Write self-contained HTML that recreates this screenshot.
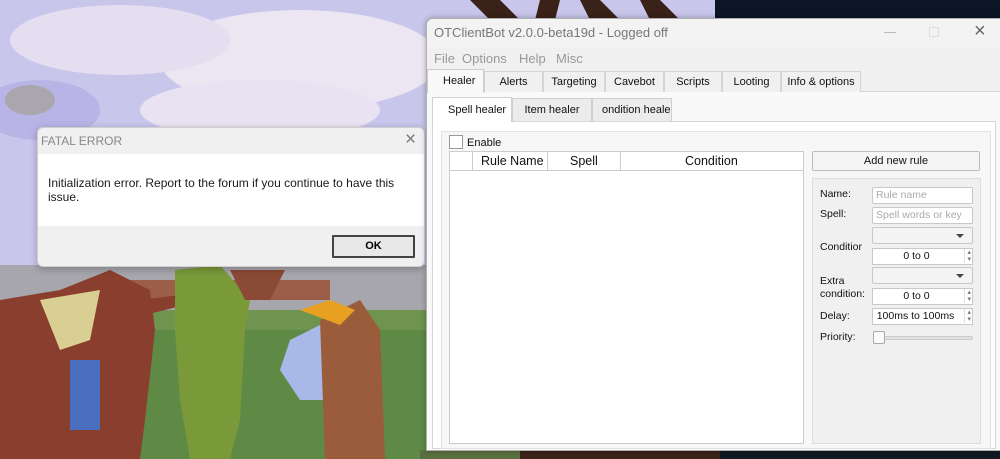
<!DOCTYPE html>
<html><head><meta charset="utf-8"><style>
*{margin:0;padding:0;box-sizing:border-box}
body{width:1000px;height:459px;overflow:hidden;position:relative;font-family:"Liberation Sans",sans-serif;background:#c9c6ec}
.a{position:absolute}
.t{position:absolute;white-space:nowrap}
.tab{position:absolute;top:71px;height:21px;border:1px solid #d4d4d4;border-bottom:none;background:#f0f0f0;font-size:11px;text-align:center;line-height:20px;color:#111;white-space:nowrap}
.itab{position:absolute;top:98px;height:23px;border:1px solid #d0d0d0;border-bottom:none;background:#ececec;font-size:11px;text-align:center;line-height:23px;color:#111;white-space:nowrap;overflow:hidden}
.lbl{position:absolute;left:820px;font-size:10.5px;color:#111}
.in{position:absolute;left:872px;width:101px;height:17px;background:#fff;border:1px solid #c8c8c8;border-radius:2px;font-size:10.5px;color:#aaa;padding-left:3px;line-height:15px;white-space:nowrap;overflow:hidden}
.cb{position:absolute;left:872px;width:101px;height:17px;background:#f4f4f4;border:1px solid #c8c8c8;border-radius:2px}
.cb:after{content:"";position:absolute;right:8px;top:6px;border-left:4px solid transparent;border-right:4px solid transparent;border-top:4px solid #444}
.sp{position:absolute;left:872px;width:101px;height:17px;background:#fff;border:1px solid #c8c8c8;font-size:10.5px;color:#111;text-align:center;line-height:15px;padding-right:12px;white-space:nowrap}
.sp:after{content:"▴\A▾";white-space:pre;position:absolute;right:1px;top:0;font-size:7px;line-height:7px;color:#777;border-left:1px solid #ddd;padding-left:2px}
</style></head><body>
<svg class="a" style="left:0;top:0" width="1000" height="459">
<rect width="1000" height="459" fill="#c9c6ec"/>
<rect x="715" y="0" width="285" height="20" fill="#0b1526"/>
<path d="M470 0 L500 0 L520 20 L490 20Z M540 0 L560 0 L555 20 L535 20Z M580 0 L600 0 L620 20 L590 20Z M640 0 L660 0 L680 20 L650 20Z" fill="#3a2218"/>
<ellipse cx="300" cy="60" rx="140" ry="50" fill="#ece6f2"/>
<ellipse cx="120" cy="40" rx="110" ry="35" fill="#e4def0"/>
<ellipse cx="260" cy="110" rx="120" ry="30" fill="#e8e2f2"/>
<ellipse cx="40" cy="110" rx="60" ry="30" fill="#b8b4e6"/>
<ellipse cx="30" cy="100" rx="25" ry="15" fill="#a9a6ad"/>
<rect x="0" y="265" width="430" height="50" fill="#a8a6ad"/>
<rect x="130" y="280" width="200" height="20" fill="#9c5e48"/>
<rect x="0" y="310" width="430" height="150" fill="#6f9450"/>
<rect x="0" y="330" width="430" height="130" fill="#5f8a45"/>
<path d="M0 300 L60 290 L110 270 L150 290 L155 330 L145 420 L140 459 L0 459Z" fill="#8a3f2e"/>
<path d="M40 300 L100 290 L90 340 L60 350Z" fill="#d9cf92"/>
<rect x="70" y="360" width="30" height="70" fill="#4a6fc0"/>
<path d="M140 300 L180 295 L185 305 L145 315Z" fill="#8a3f2e"/>
<path d="M175 270 L220 265 L250 300 L245 330 L240 420 L230 459 L190 459 L180 400 L175 330Z" fill="#7a9a3a"/>
<path d="M230 270 L285 270 L270 300 L245 300Z" fill="#8b4a35"/>
<path d="M290 340 L330 320 L360 330 L365 380 L340 400 L300 400 L280 370Z" fill="#a8b8e8"/>
<path d="M320 320 L360 300 L380 330 L385 459 L325 459Z" fill="#9b5c3c"/>
<path d="M300 310 L330 300 L355 310 L340 325Z" fill="#e8a020"/>
<rect x="420" y="450" width="580" height="9" fill="#101822"/>
<rect x="420" y="450" width="100" height="9" fill="#5a7040"/>
<rect x="520" y="450" width="200" height="9" fill="#3a2418"/>
</svg>

<!-- Fatal error dialog -->
<div class="a" style="left:37px;top:127px;width:388px;height:140px;background:#f0f0f0;border:1px solid #cfcfcf;border-radius:6px;box-shadow:0 2px 8px rgba(0,0,0,.25);overflow:hidden">
<div class="t" style="left:3px;top:6px;font-size:12px;color:#888">FATAL ERROR</div>
<div class="t" style="left:367px;top:1px;font-size:19px;color:#777;font-weight:300">×</div>
<div class="a" style="left:0;top:26px;width:388px;height:72px;background:#fff"></div>
<div class="t" style="left:10px;top:48px;font-size:12px;color:#1a1a1a;line-height:14px">Initialization error. Report to the forum if you continue to have this<br>issue.</div>
<div class="a" style="left:294px;top:107px;width:83px;height:23px;border:2px solid #444;border-radius:1px;background:#e8e8e8;font-size:11px;font-weight:bold;text-align:center;line-height:19px">OK</div>
</div>

<!-- Main window -->
<div class="a" style="left:426px;top:18px;width:576px;height:433px;background:#f0f0f0;border:1px solid #b0b0b0;border-radius:7px 0 0 0;box-shadow:0 0 6px rgba(0,0,0,.3)"></div>
<div class="a" style="left:427px;top:19px;width:573px;height:28px;background:#f3f3f3;border-radius:6px 0 0 0"></div>
<div class="t" style="left:434px;top:25px;font-size:13px;color:#777">OTClientBot v2.0.0-beta19d - Logged off</div>
<div class="a" style="left:884px;top:32px;width:12px;height:1px;background:#bbb"></div>
<div class="a" style="left:929px;top:27px;width:10px;height:10px;border:1px solid #ddd"></div>
<div class="t" style="left:974px;top:20px;font-size:20px;color:#666;font-weight:300">×</div>
<div class="t" style="left:434px;top:51px;font-size:13px;color:#999">File</div>
<div class="t" style="left:462px;top:51px;font-size:13px;color:#999">Options</div>
<div class="t" style="left:519px;top:51px;font-size:13px;color:#999">Help</div>
<div class="t" style="left:556px;top:51px;font-size:13px;color:#999">Misc</div>

<div class="a" style="left:427px;top:91px;width:573px;height:359px;background:#f9f9f9;border-top:1px solid #d4d4d4"></div>
<div class="tab" style="left:484px;width:59px">Alerts</div>
<div class="tab" style="left:543px;width:62px">Targeting</div>
<div class="tab" style="left:605px;width:59px">Cavebot</div>
<div class="tab" style="left:664px;width:58px">Scripts</div>
<div class="tab" style="left:722px;width:59px">Looting</div>
<div class="tab" style="left:781px;width:80px">Info &amp; options</div>
<div class="tab" style="left:427px;top:69px;width:57px;height:24px;background:#f9f9f9;border-color:#ccc;line-height:22px;text-align:left;padding-left:15px">Healer</div>

<div class="a" style="left:432px;top:121px;width:564px;height:328px;background:#fff;border:1px solid #d6d6d6"></div>
<div class="itab" style="left:512px;width:80px">Item healer</div>
<div class="itab" style="left:592px;width:80px;text-align:left;padding-left:9px">ondition heale</div>
<div class="itab" style="left:432px;top:97px;width:80px;height:25px;background:#fff;text-align:left;padding-left:15px;line-height:25px">Spell healer</div>

<div class="a" style="left:441px;top:131px;width:550px;height:318px;background:#f7f7f7;border:1px solid #e2e2e2"></div>
<div class="a" style="left:449px;top:135px;width:14px;height:14px;background:#fff;border:1px solid #999"></div>
<div class="t" style="left:467px;top:137px;font-size:11px;color:#111">Enable</div>

<div class="a" style="left:449px;top:151px;width:355px;height:293px;background:#fff;border:1px solid #ccc"></div>
<div class="a" style="left:449px;top:151px;width:355px;height:20px;border:1px solid #ccc;background:#fff"></div>
<div class="a" style="left:472px;top:152px;width:1px;height:18px;background:#ccc"></div>
<div class="a" style="left:547px;top:152px;width:1px;height:18px;background:#ccc"></div>
<div class="a" style="left:620px;top:152px;width:1px;height:18px;background:#ccc"></div>
<div class="t" style="left:481px;top:154px;font-size:12.5px;color:#111">Rule Name</div>
<div class="t" style="left:570px;top:154px;font-size:12.5px;color:#111">Spell</div>
<div class="t" style="left:685px;top:154px;font-size:12.5px;color:#111">Condition</div>

<div class="a" style="left:812px;top:151px;width:168px;height:20px;background:#f5f5f5;border:1px solid #bdbdbd;border-radius:2px;font-size:11px;text-align:center;line-height:18px;color:#111">Add new rule</div>

<div class="a" style="left:812px;top:178px;width:169px;height:266px;background:#f0f0f0;border:1px solid #dcdcdc"></div>
<div class="lbl" style="top:188px">Name:</div>
<div class="lbl" style="top:208px">Spell:</div>
<div class="lbl" style="top:241px">Conditior</div>
<div class="lbl" style="top:275px">Extra</div>
<div class="lbl" style="top:288px">condition:</div>
<div class="lbl" style="top:310px">Delay:</div>
<div class="lbl" style="top:331px">Priority:</div>
<div class="in" style="top:187px">Rule name</div>
<div class="in" style="top:207px">Spell words or key</div>
<div class="cb" style="top:227px"></div>
<div class="sp" style="top:248px">0 to 0</div>
<div class="cb" style="top:267px"></div>
<div class="sp" style="top:288px">0 to 0</div>
<div class="sp" style="top:308px;padding-right:14px">100ms to 100ms</div>
<div class="a" style="left:873px;top:336px;width:100px;height:4px;background:#e0e0e0;border:1px solid #ccc;border-radius:2px"></div>
<div class="a" style="left:873px;top:331px;width:12px;height:13px;background:#fafafa;border:1px solid #aaa;border-radius:2px"></div>
</body></html>
